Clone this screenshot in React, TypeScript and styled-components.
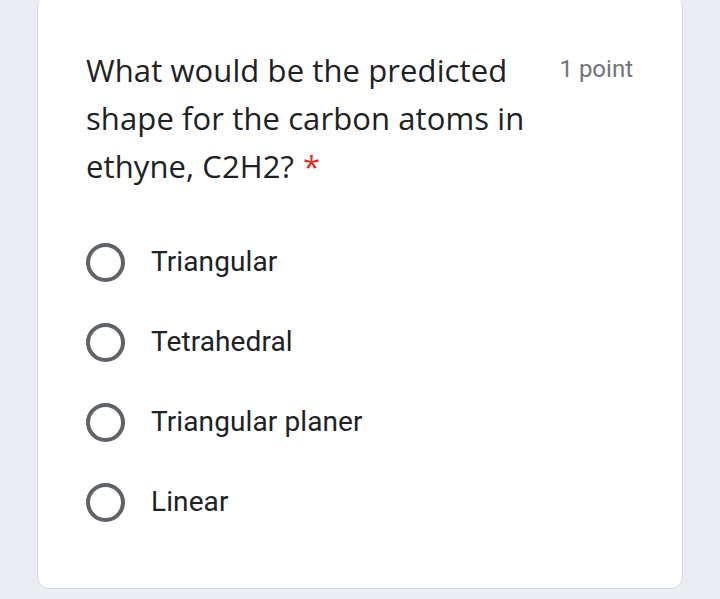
import React from "react";
import styled, { createGlobalStyle } from "styled-components";

const GlobalStyle = createGlobalStyle`
  html, body {
    margin: 0;
    padding: 0;
    background: #eaedf2;
  }
  body {
    font-family: Roboto, "Noto Sans", sans-serif;
  }
`;

const Page = styled.div`
  width: 720px;
  height: 599px;
  overflow: hidden;
  padding: 0 37px;
  box-sizing: border-box;
`;

const Card = styled.div`
  margin-top: -6px;
  height: 595px;
  box-sizing: border-box;
  background: #ffffff;
  border: 1px solid #d6d9de;
  border-radius: 12px;
  padding: 51px 49px 0 48px;
`;

const Header = styled.div`
  display: flex;
  justify-content: space-between;
  align-items: flex-start;
`;

const Question = styled.div`
  width: 455px;
  font-family: "Open Sans", Roboto, sans-serif;
  font-size: 31px;
  line-height: 48px;
  letter-spacing: 0.1px;
  color: #202124;
`;

const Required = styled.span`
  display: inline-block;
  margin-left: 9px;
  line-height: 1;
  color: #d93025;
`;

const Points = styled.div`
  font-size: 24px;
  line-height: 46px;
  color: #70757a;
  white-space: nowrap;
`;

const Options = styled.div`
  display: flex;
  flex-direction: column;
  margin-top: 32px;
`;

const Option = styled.label`
  display: flex;
  align-items: center;
  height: 80px;
  gap: 26px;
`;

const Radio = styled.span`
  width: 39px;
  height: 39px;
  box-sizing: border-box;
  border: 4px solid #5f6368;
  border-radius: 50%;
  flex: none;
`;

const OptionText = styled.span`
  font-size: 28px;
  line-height: 34px;
  color: #202124;
  letter-spacing: 0.1px;
`;

const options = ["Triangular", "Tetrahedral", "Triangular planer", "Linear"];

export default function App() {
  return (
    <>
      <GlobalStyle />
      <Page>
        <Card>
          <Header>
            <Question>
              What would be the predicted shape for the carbon atoms in ethyne, C2H2?
              <Required>*</Required>
            </Question>
            <Points>1 point</Points>
          </Header>
          <Options>
            {options.map((o) => (
              <Option key={o}>
                <Radio />
                <OptionText>{o}</OptionText>
              </Option>
            ))}
          </Options>
        </Card>
      </Page>
    </>
  );
}
